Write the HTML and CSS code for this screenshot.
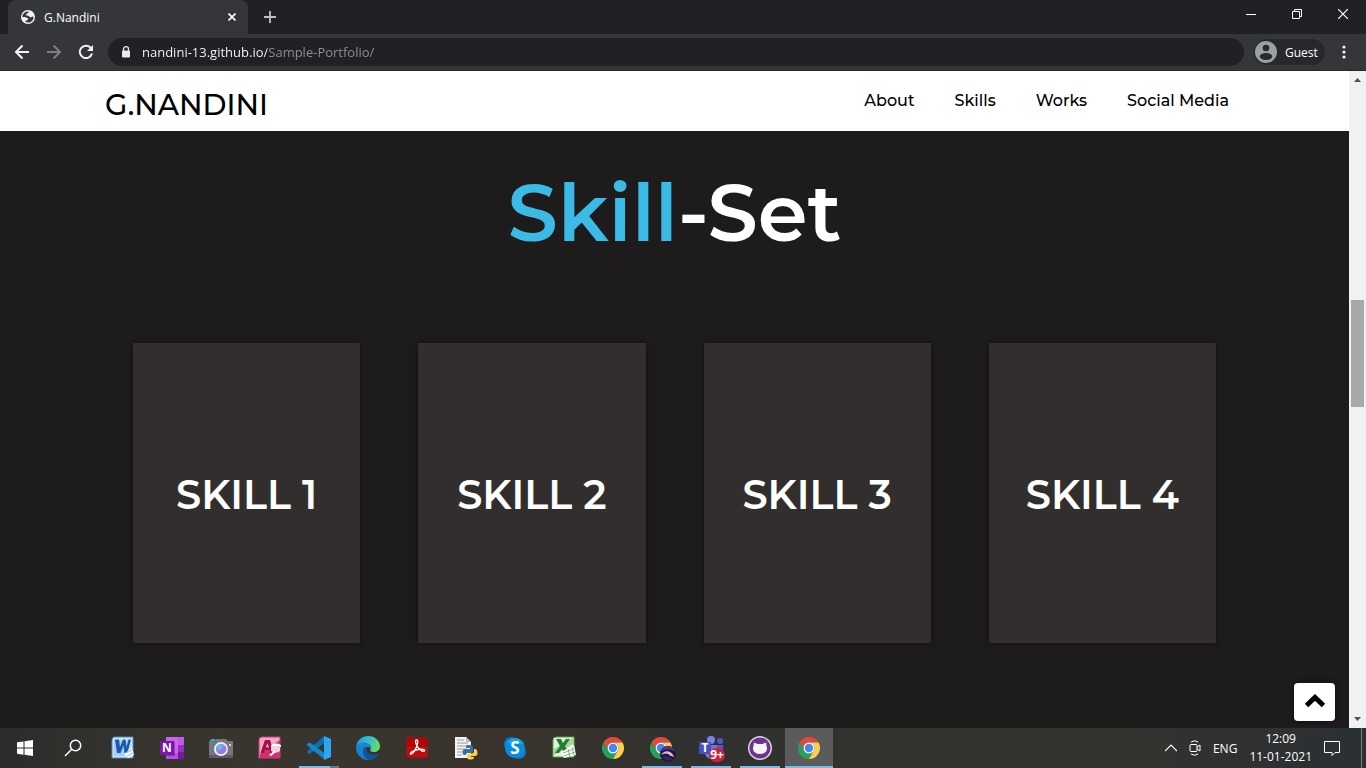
FILE: index.html
```html
<!DOCTYPE html>
<html lang="en">
<head>
  <meta charset="UTF-8" />
  <meta name="viewport" content="width=device-width, initial-scale=1.0" />
  <title>G.Nandini</title>
  <link rel="stylesheet" href="styles.css">
</head>
<body>

<!-- shared logo -->
<svg width="0" height="0" class="defs" aria-hidden="true">
  <symbol id="chrome" viewBox="0 0 24 24">
    <path fill="#e24a3d" d="M12 6.5H21.53A11 11 0 0 0 2.47 6.5L7.24 14.75A5.5 5.5 0 0 1 12 6.5Z"/>
    <path fill="#22a35a" d="M7.24 14.75L2.47 6.5A11 11 0 0 0 12 23L16.76 14.75A5.5 5.5 0 0 1 7.24 14.75Z"/>
    <path fill="#fdd04a" d="M16.76 14.75L12 23A11 11 0 0 0 21.53 6.5H12A5.5 5.5 0 0 1 16.76 14.75Z"/>
    <circle cx="12" cy="12" r="5.5" fill="#f4f4f4"/>
    <circle cx="12" cy="12" r="4.2" fill="#4587f0"/>
  </symbol>
</svg>

<header class="browser">
  <div class="tab-strip">
    <div class="tab">
      <svg width="14" height="14" viewBox="0 0 14 14">
        <circle cx="7" cy="7" r="7" fill="#f1f3f4"/>
        <path fill="#35363a" d="M7.600 1.400C7.800 2.500 7.200 3.100 6 3.300C5.900 4.300 5 4.200 4.700 5C5.400 5.900 7.400 5.300 8 6.300C8.200 7.300 9.200 7.200 10.300 7.300C11.200 6.300 12 6.500 12.600 7.200C12.400 10.400 10.200 12.500 7 12.600C5.900 12.600 5.200 12.400 4.600 12.100V10.600H6.400C6.500 9.400 7 9.300 7.400 8.600C6.700 7.600 5.300 8.400 4.700 7.500C3.800 6.600 2.600 7 1.400 7.300C1.200 4 3.500 1.400 7.600 1.400Z"/>
      </svg>
      <span class="tab-title">G.Nandini</span>
      <button class="tab-close" aria-label="Close tab">
        <svg width="8" height="8" viewBox="0 0 8 8"><path d="M.5.5L7.500 7.500M7.500.5L.5 7.500" stroke="#fff" stroke-width="1.600"/></svg>
      </button>
    </div>
    <button class="new-tab" aria-label="New tab">
      <svg width="12" height="12" viewBox="0 0 12 12"><path d="M6 0V12M0 6H12" stroke="#bdc1c6" stroke-width="1.800"/></svg>
    </button>
    <div class="window-buttons">
      <button aria-label="Minimize"><svg width="10" height="10" viewBox="0 0 10 10"><path d="M0 5.500H10" stroke="#fff"/></svg></button>
      <button aria-label="Restore"><svg width="10" height="10" viewBox="0 0 10 10" fill="none" stroke="#fff"><path d="M.5 2.500H7.500V9.500H.5Z"/><path d="M2.500 2.500V.5H9.500V7.500H7.500"/></svg></button>
      <button aria-label="Close"><svg width="10" height="10" viewBox="0 0 10 10"><path d="M0 0L10 10M10 0L0 10" stroke="#fff" stroke-width="1.200"/></svg></button>
    </div>
  </div>
  <div class="toolbar">
    <button aria-label="Back"><svg width="16" height="16" viewBox="0 0 16 16" fill="none" stroke="#f1f3f4" stroke-width="2"><path d="M15 8H2.500M8.500 1.500L2 8L8.500 14.500"/></svg></button>
    <button aria-label="Forward"><svg width="16" height="16" viewBox="0 0 16 16" fill="none" stroke="#7d7e82" stroke-width="2"><path d="M1 8H13.500M7.500 1.500L14 8L7.500 14.500"/></svg></button>
    <button aria-label="Reload"><svg width="16" height="16" viewBox="0 0 16 16"><path d="M13 4.200A6.200 6.200 0 1 0 14 9.500" fill="none" stroke="#f1f3f4" stroke-width="2"/><path d="M15 1V7H9Z" fill="#f1f3f4"/></svg></button>
    <label class="address">
      <svg width="10" height="12" viewBox="0 0 10 12"><path d="M2.500 5V3.200A2.500 2.500 0 0 1 7.500 3.200V5" fill="none" stroke="#e8eaed" stroke-width="1.300"/><rect x="1" y="4.500" width="8" height="7" rx="1" fill="#e8eaed"/></svg>
      <input type="text" value="nandini-13.github.io/Sample-Portfolio/" aria-label="Address" spellcheck="false">
    </label>
    <button class="profile">
      <svg width="22" height="22" viewBox="0 0 22 22"><circle cx="11" cy="11" r="11" fill="#9aa0a6"/><circle cx="11" cy="7" r="3.300" fill="#292a2e"/><ellipse cx="11" cy="15.500" rx="6.200" ry="3.400" fill="#292a2e"/></svg>
      Guest
    </button>
    <button class="menu" aria-label="Menu"><svg width="4" height="14" viewBox="0 0 4 14" fill="#f1f3f4"><circle cx="2" cy="2" r="1.600"/><circle cx="2" cy="7" r="1.600"/><circle cx="2" cy="12" r="1.600"/></svg></button>
  </div>
</header>

<div class="viewport">
  <main class="page">
    <nav class="navbar">
      <a class="brand" href="#home">G.NANDINI</a>
      <div class="nav-links">
        <a href="#about">About</a>
        <a href="#skills">Skills</a>
        <a href="#works">Works</a>
        <a href="#social">Social Media</a>
      </div>
    </nav>

    <section id="skills" class="skills">
      <h1><span>Skill</span>-Set</h1>
      <div class="cards">
        <div class="card">SKILL 1</div>
        <div class="card">SKILL 2</div>
        <div class="card">SKILL 3</div>
        <div class="card">SKILL 4</div>
      </div>
    </section>

    <a class="to-top" href="#home" aria-label="Back to top">
      <svg width="24" height="16" viewBox="0 0 24 16"><path d="M3.500 11.500L12 3.500L20.500 11.500" fill="none" stroke="#000" stroke-width="5"/></svg>
    </a>
  </main>
  <div class="scrollbar">
    <svg width="17" height="17" viewBox="0 0 17 17"><path d="M5 11L8.500 7L12 11Z" fill="#505050"/></svg>
    <div class="track"><div class="thumb"></div></div>
    <svg width="17" height="17" viewBox="0 0 17 17"><path d="M5 6L8.500 10L12 6Z" fill="#505050"/></svg>
  </div>
</div>

<footer class="taskbar">
  <div class="apps">
    <button aria-label="Start"><svg width="24" height="24" viewBox="0 0 24 24" fill="#fff"><path d="M4 6.300L10.500 5.400V11.500H4ZM11.500 5.200L20 4V11.500H11.500ZM4 12.500H10.500V18.700L4 17.800ZM11.500 12.500H20V20L11.500 18.800Z"/></svg></button>
    <button aria-label="Search"><svg width="24" height="24" viewBox="0 0 24 24" fill="none" stroke="#fff" stroke-width="1.500"><circle cx="13.500" cy="9.500" r="5.200"/><path d="M9.700 13.300L3 20"/></svg></button>
    <button aria-label="Word">
      <svg width="24" height="24" viewBox="0 0 24 24">
        <path d="M4 1H22V22H1V4Q1 1 4 1Z" fill="#cfe2f5" stroke="#4d8dcb"/>
        <path d="M3 4H17V20H3Z" fill="#a9ceef"/>
        <path d="M4 3.500H8L9 11L12 3.500H14.500L15.500 11L17.500 3.500H20L16.500 17H13.500L12.500 9.500L9.500 17H6Z" fill="#1c5aae"/>
        <path d="M13 18L21 12L23 19L17 22Z" fill="#fff"/><path d="M15 17L21 14M16 20L22 17" stroke="#8cb5df"/>
      </svg>
    </button>
    <button aria-label="OneNote">
      <svg width="24" height="24" viewBox="0 0 24 24">
        <rect x="6" y="1" width="18" height="22" fill="#ca64ea"/>
        <path d="M18 1H24V9H18Z" fill="#c05be0"/><path d="M18 9H24V16H18Z" fill="#9332bf"/><path d="M6 17H24V23H6Z" fill="#b94ddd"/><path d="M18 16H24V23H18Z" fill="#7719aa"/>
        <path d="M6 6H15V20H6Z" fill="#6b1a91" opacity=".5"/><rect x="0" y="5" width="14" height="14" fill="#7719aa"/>
        <text x="7" y="16" class="glyph glyph-sm">N</text>
      </svg>
    </button>
    <button aria-label="Camera">
      <svg width="24" height="24" viewBox="0 0 24 24">
        <path d="M1 5H6V3H2Z" fill="#20a8e8"/><path d="M7 3H17L19 5H24V22H0V5H5Z" fill="#74777b"/><path d="M0 19H24V22H0Z" fill="#5b5e62"/>
        <circle cx="12" cy="13" r="7" fill="#f0f1f4"/><circle cx="12" cy="13" r="5.200" fill="#8293ef"/><path d="M9 16.500A5 5 0 0 0 16.500 10Z" fill="#b16ee3"/><circle cx="10.500" cy="11" r="2.500" fill="#69b9f5"/><rect x="20" y="8" width="2" height="2" fill="#d5d8dc"/>
      </svg>
    </button>
    <button aria-label="Access">
      <svg width="24" height="24" viewBox="0 0 24 24">
        <path d="M4 1H22V22H1V4Q1 1 4 1Z" fill="#f0a9c4" stroke="#cf3b76"/><path d="M2 18L22 4V22H2Z" fill="#cf336f"/>
        <path d="M7 4H12L16 17H12.500L11.700 14H7L6 17H2.500ZM9.500 7L7.800 11.500H10.900Z" fill="#a50e47" fill-rule="evenodd"/>
        <ellipse cx="18" cy="10" rx="5" ry="2.500" fill="#fff"/><path d="M13 10H22V15Q18 18 13 15Z" fill="#f3d3df"/><path d="M11 19L16 15L18 16L13 20Z" fill="#fff"/>
      </svg>
    </button>
    <button class="running stacked" aria-label="Visual Studio Code">
      <svg width="24" height="24" viewBox="0 0 24 24">
        <path d="M0 15.300L17 0V7.200L2.600 18L0 16.500Z" fill="#0d6fb0"/>
        <path d="M0 8L2.600 6.200L18 17.500V24L0 9.200Z" fill="#1287cc"/>
        <path d="M17 0L24 3V21L17 24Z" fill="#2ba6f0"/>
      </svg>
    </button>
    <button aria-label="Edge">
      <svg width="24" height="24" viewBox="0 0 24 24">
        <defs>
          <linearGradient id="edge-top" x1="0" y1=".3" x2="1" y2=".6"><stop offset="0" stop-color="#1f9fdc"/><stop offset=".5" stop-color="#35bfc9"/><stop offset="1" stop-color="#6be05a"/></linearGradient>
          <linearGradient id="edge-left" x1="0" y1="0" x2="0" y2="1"><stop offset="0" stop-color="#1b86d6"/><stop offset="1" stop-color="#1a78cf"/></linearGradient>
        </defs>
        <path d="M0 11C1 4 6 0 12 0C19 0 24 5 24 10.500C24 14 21 16 18 16C15 16 13.500 15 14.500 13.500C16 10 13 7 8.500 7C4 7 1 8.500 0 11Z" fill="url(#edge-top)"/>
        <path d="M0 11.500C1 8 4.500 6 8.500 6.500C13 7 15.500 9.500 15 12.500C12 9.500 9 11.500 9 15C9 19.500 12 22.500 15 23.600C7 25.500 0 19.500 0 11.500Z" fill="url(#edge-left)"/>
        <path d="M10 10.500C5 12 6 22 13 24C17 24 20.500 22 22.700 18.500C23 17.700 22.500 17.500 22 17.800C16 20.500 9 18 10 10.500Z" fill="#11539f"/>
      </svg>
    </button>
    <button aria-label="Acrobat Reader">
      <svg width="24" height="24" viewBox="0 0 24 24">
        <rect x="1.500" y="1.500" width="21" height="20" fill="#c40b0b"/><path d="M2 2H22V11H2Z" fill="#b30505"/>
        <path d="M11.500 4C14 4 12.500 9 10.500 13C9 16.500 6.500 18.500 5.500 18C4.500 17 8 14.500 13 13.500C17 12.500 20 13.500 19.500 15C18.500 16.500 14 13.500 12 10C10.500 7 10 4 11.500 4Z" fill="none" stroke="#fff" stroke-width="1.300"/>
      </svg>
    </button>
    <button aria-label="Python">
      <svg width="24" height="24" viewBox="0 0 24 24">
        <path d="M1 1H12L17 6V22H1Z" fill="#f3f3f3"/><path d="M12 1V6H17Z" fill="#bdbdbd"/><path d="M3 4H10M3 7H14M3 10H14M3 13H12M3 16H8M3 19H8" stroke="#999"/>
        <path d="M12 10Q12 9 16 9Q19 9 19 11V15Q19 17 17 17H13Q12 17 12 19H10Q8 18 8.500 15Q9 13 11 13H16V12H12Z" fill="#3872a4"/>
        <path d="M20 13H22Q24 15 23.500 18Q23 20 21 20H17V21H20V22Q19 24 16 23.500Q13 23.500 13 21V19Q13 17.500 15 17.500H18Q20 17 20 15Z" fill="#ffd141"/>
      </svg>
    </button>
    <button aria-label="Skype">
      <svg width="24" height="24" viewBox="0 0 24 24"><circle cx="8" cy="8" r="7" fill="#0b78ca"/><circle cx="16" cy="16" r="7" fill="#0b78ca"/><circle cx="12" cy="12" r="10" fill="#098bdd"/><path d="M3 7Q9 0 16 3Q20 5 21 8Z" fill="#17a4e9"/><text x="12" y="18" class="glyph">S</text></svg>
    </button>
    <button aria-label="Excel">
      <svg width="24" height="24" viewBox="0 0 24 24">
        <path d="M4 1H22V21H1V4Q1 1 4 1Z" fill="#dff1d9" stroke="#54a04c"/><path d="M2 13L21 2V8L2 19Z" fill="#a6d59b"/>
        <path d="M4 3H9L11 7L14 3H18L13 10L17 17H12L10 13L7 17H3L8 10Z" fill="#227c32"/>
        <path d="M9 16L22 9L24 19L12 22Z" fill="#fff"/><path d="M11 17L22 13M12 20L23 16M16 13L18 21M20 11L22 19" stroke="#66a45b" stroke-width=".8"/>
      </svg>
    </button>
    <button aria-label="Chrome"><svg width="24" height="24"><use href="#chrome"/></svg></button>
    <button class="running" aria-label="Chrome, second profile">
      <svg width="28" height="28" viewBox="0 0 28 28"><use href="#chrome" x="1" y="2" width="24" height="24"/><circle cx="20" cy="20" r="8" fill="#211735"/><path d="M13 17Q15 12 21 12.500Q26 13 27 18Q22 13 13 17Z" fill="#5c2c93"/><path d="M13 21Q16 16 21 17.500Q25 19 26 23Q22 22 20 20Q17 18.500 13 21Z" fill="#e4b6d5"/><path d="M14 23Q19 20 25 25Q20 29 14 23Z" fill="#35246f"/></svg>
    </button>
    <button class="running" aria-label="Teams">
      <svg width="28" height="28" viewBox="0 0 28 28">
        <circle cx="14" cy="6" r="4" fill="#7b83eb"/><circle cx="23" cy="7" r="3" fill="#5059c9"/><path d="M19 11H26V18Q25 21 20 20Z" fill="#5059c9"/><path d="M8 11H20V21Q18 25 14 25Q9 24 8 20Z" fill="#7078dd"/><rect x="2" y="8" width="12" height="12" fill="#4650bb"/>
        <text x="8" y="18" class="glyph glyph-sm">T</text><rect x="12" y="14" width="16" height="14" rx="7" fill="#cf213c"/><text x="20" y="25" class="glyph glyph-sm">9+</text>
      </svg>
    </button>
    <button class="running" aria-label="GitHub Desktop">
      <svg width="24" height="24" viewBox="0 0 24 24"><circle cx="12" cy="12" r="11.300" fill="#6d3391" stroke="#ded8e2" stroke-width="1.400"/><path d="M6 6.500L9.500 8H14.500L18 6.500L18.500 10Q20 14 17 16.500Q15 18 12 18Q9 18 7 16.500Q4 14 5.500 10Z" fill="#f5f2f6"/></svg>
    </button>
    <button class="running active" aria-label="Chrome window"><svg width="24" height="24"><use href="#chrome"/></svg></button>
  </div>
  <div class="tray">
    <svg width="12" height="12" viewBox="0 0 12 12"><path d="M0 9L6 3L12 9" fill="none" stroke="#fff" stroke-width="1.200"/></svg>
    <svg width="12" height="16" viewBox="0 0 12 16" fill="none" stroke="#fff"><rect x="1" y="4.500" width="7" height="7" rx="1"/><path d="M8 7L11 5V11L8 9M2 2Q5.500-.5 9 2M2 14Q5.500 16.500 9 14"/></svg>
    <span class="lang">ENG</span>
    <div class="clock"><span>12:09</span><span>11-01-2021</span></div>
    <svg width="16" height="16" viewBox="0 0 16 16"><path d="M.5 1.500H15.500V12.500H11L8 15.500V12.500H.5Z" fill="none" stroke="#fff"/></svg>
  </div>
</footer>

</body>
</html>
```
FILE: styles.css
```css
* {
  box-sizing: border-box;
}
body {
  margin: 0;
  height: 100vh;
  display: flex;
  flex-direction: column;
  overflow: hidden;
  font-family: "Segoe UI", "Open Sans", sans-serif;
  font-size: 12px;
  color: #fff;
}
.defs {
  position: absolute;
}
svg {
  display: block;
  flex: none;
}
button {
  display: flex;
  align-items: center;
  justify-content: center;
  padding: 0;
  border: 0;
  background: none;
  color: inherit;
  font: inherit;
}
a {
  color: inherit;
  text-decoration: none;
}

/* browser window */
.browser {
  background: #35363a;
  border-bottom: 1px solid #29282a;
}
.tab-strip {
  display: flex;
  height: 34px;
  padding-left: 8px;
  background: #202124;
}
.tab {
  display: flex;
  align-items: center;
  gap: 9px;
  width: 240px;
  padding: 0 12px 0 13px;
  background: #35363a;
  border-radius: 8px 8px 0 0;
}
.tab-title {
  flex: 1;
}
.new-tab {
  width: 44px;
}
.window-buttons {
  display: flex;
  margin-left: auto;
  height: 28px;
}
.window-buttons button {
  width: 46px;
}
.toolbar {
  display: flex;
  align-items: center;
  height: 36px;
  padding: 0 7px 0 6px;
}
.toolbar > button {
  width: 32px;
  height: 28px;
}
.address {
  flex: 1;
  display: flex;
  align-items: center;
  gap: 11px;
  height: 28px;
  margin: 0 10px 0 6px;
  padding: 0 13px;
  border-radius: 14px;
  background: #202124;
}
/* host is white, the path is grey */
.address input {
  flex: 1;
  padding: 0;
  border: 0;
  outline: 0;
  font: 13px "Segoe UI", "Open Sans", sans-serif;
  color: transparent;
  background: linear-gradient(to right, #fff 125px, #8f9398 125px);
  -webkit-background-clip: text;
  background-clip: text;
}
.toolbar .profile {
  justify-content: flex-start;
  gap: 8px;
  width: 71px;
  height: 26px;
  padding-left: 1px;
  border-radius: 13px;
  background: #27282c;
}
.toolbar .menu {
  width: 30px;
  margin-left: 4px;
}

/* portfolio page */
.viewport {
  flex: 1;
  display: flex;
  min-height: 0;
}
.page {
  position: relative;
  flex: 1;
  background: #1e1b1c;
  font-family: Montserrat, Inter, sans-serif;
}
.navbar {
  display: flex;
  justify-content: space-between;
  align-items: center;
  height: 60px;
  padding: 0 120px 0 105px;
  background: #fff;
  color: #000;
}
.brand {
  padding-top: 6px;
  font-size: 29px;
  font-weight: 500;
}
.nav-links {
  display: flex;
  gap: 40px;
  padding-bottom: 2px;
  font-size: 16px;
  font-weight: 500;
}
.skills h1 {
  margin: 32px 0 80px;
  font-size: 80px;
  line-height: 100px;
  font-weight: 600;
  text-align: center;
}
.skills h1 span {
  color: #3abae5;
}
.cards {
  display: grid;
  grid-template-columns: repeat(4, 1fr);
  gap: 58px;
  padding: 0 133px;
}
.card {
  display: flex;
  align-items: center;
  justify-content: center;
  height: 300px;
  padding-top: 2px;
  background: #322e2d;
  box-shadow: 0 0 6px rgba(0, 0, 0, 0.5);
  font-size: 40px;
  font-weight: 600;
}
.to-top {
  position: absolute;
  right: 14px;
  bottom: 7px;
  display: flex;
  align-items: center;
  justify-content: center;
  width: 41px;
  height: 38px;
  border-radius: 4px;
  background: #fff;
  box-shadow: 0 0 6px rgba(0, 0, 0, 0.6);
}
.scrollbar {
  display: flex;
  flex-direction: column;
  width: 17px;
  background: #f1f1f1;
}
.track {
  flex: 1;
  display: grid;
  grid-template-rows: 212fr 107fr 304fr;
  padding: 0 2px;
}
.thumb {
  grid-row: 2;
  background: #a8a8a8;
}

/* taskbar */
.taskbar {
  display: flex;
  justify-content: space-between;
  height: 40px;
  padding-left: 1px;
  background: linear-gradient(to right, #2c2c2b, #38352f 12%, #3a332d 38%, #30312f 50%, #33322e 65%, #33322f 83%, #2b3033);
}
.apps {
  display: flex;
  gap: 1px;
}
.apps button {
  width: 48px;
  height: 40px;
}
.running {
  background: linear-gradient(#76b9ed, #76b9ed) bottom / 40px 2px no-repeat;
}
.apps .running {
  background: linear-gradient(#76b9ed, #76b9ed) bottom / 40px 2px no-repeat;
}
.apps .stacked {
  background-image: linear-gradient(to right, #76b9ed 31px, #527c9d 31px);
}
.apps .active {
  background-size: 100% 2px;
  background-color: #5a5b5a;
}
.glyph {
  fill: #fff;
  font-size: 17px;
  font-weight: 700;
  text-anchor: middle;
}
.glyph-sm {
  font-size: 12px;
}
.tray {
  display: flex;
  align-items: center;
  gap: 12px;
  margin-right: 4px;
  padding-right: 21px;
  border-right: 1px solid #7b7e80;
}
.clock {
  display: flex;
  flex-direction: column;
  align-items: center;
  line-height: 18px;
}
```
